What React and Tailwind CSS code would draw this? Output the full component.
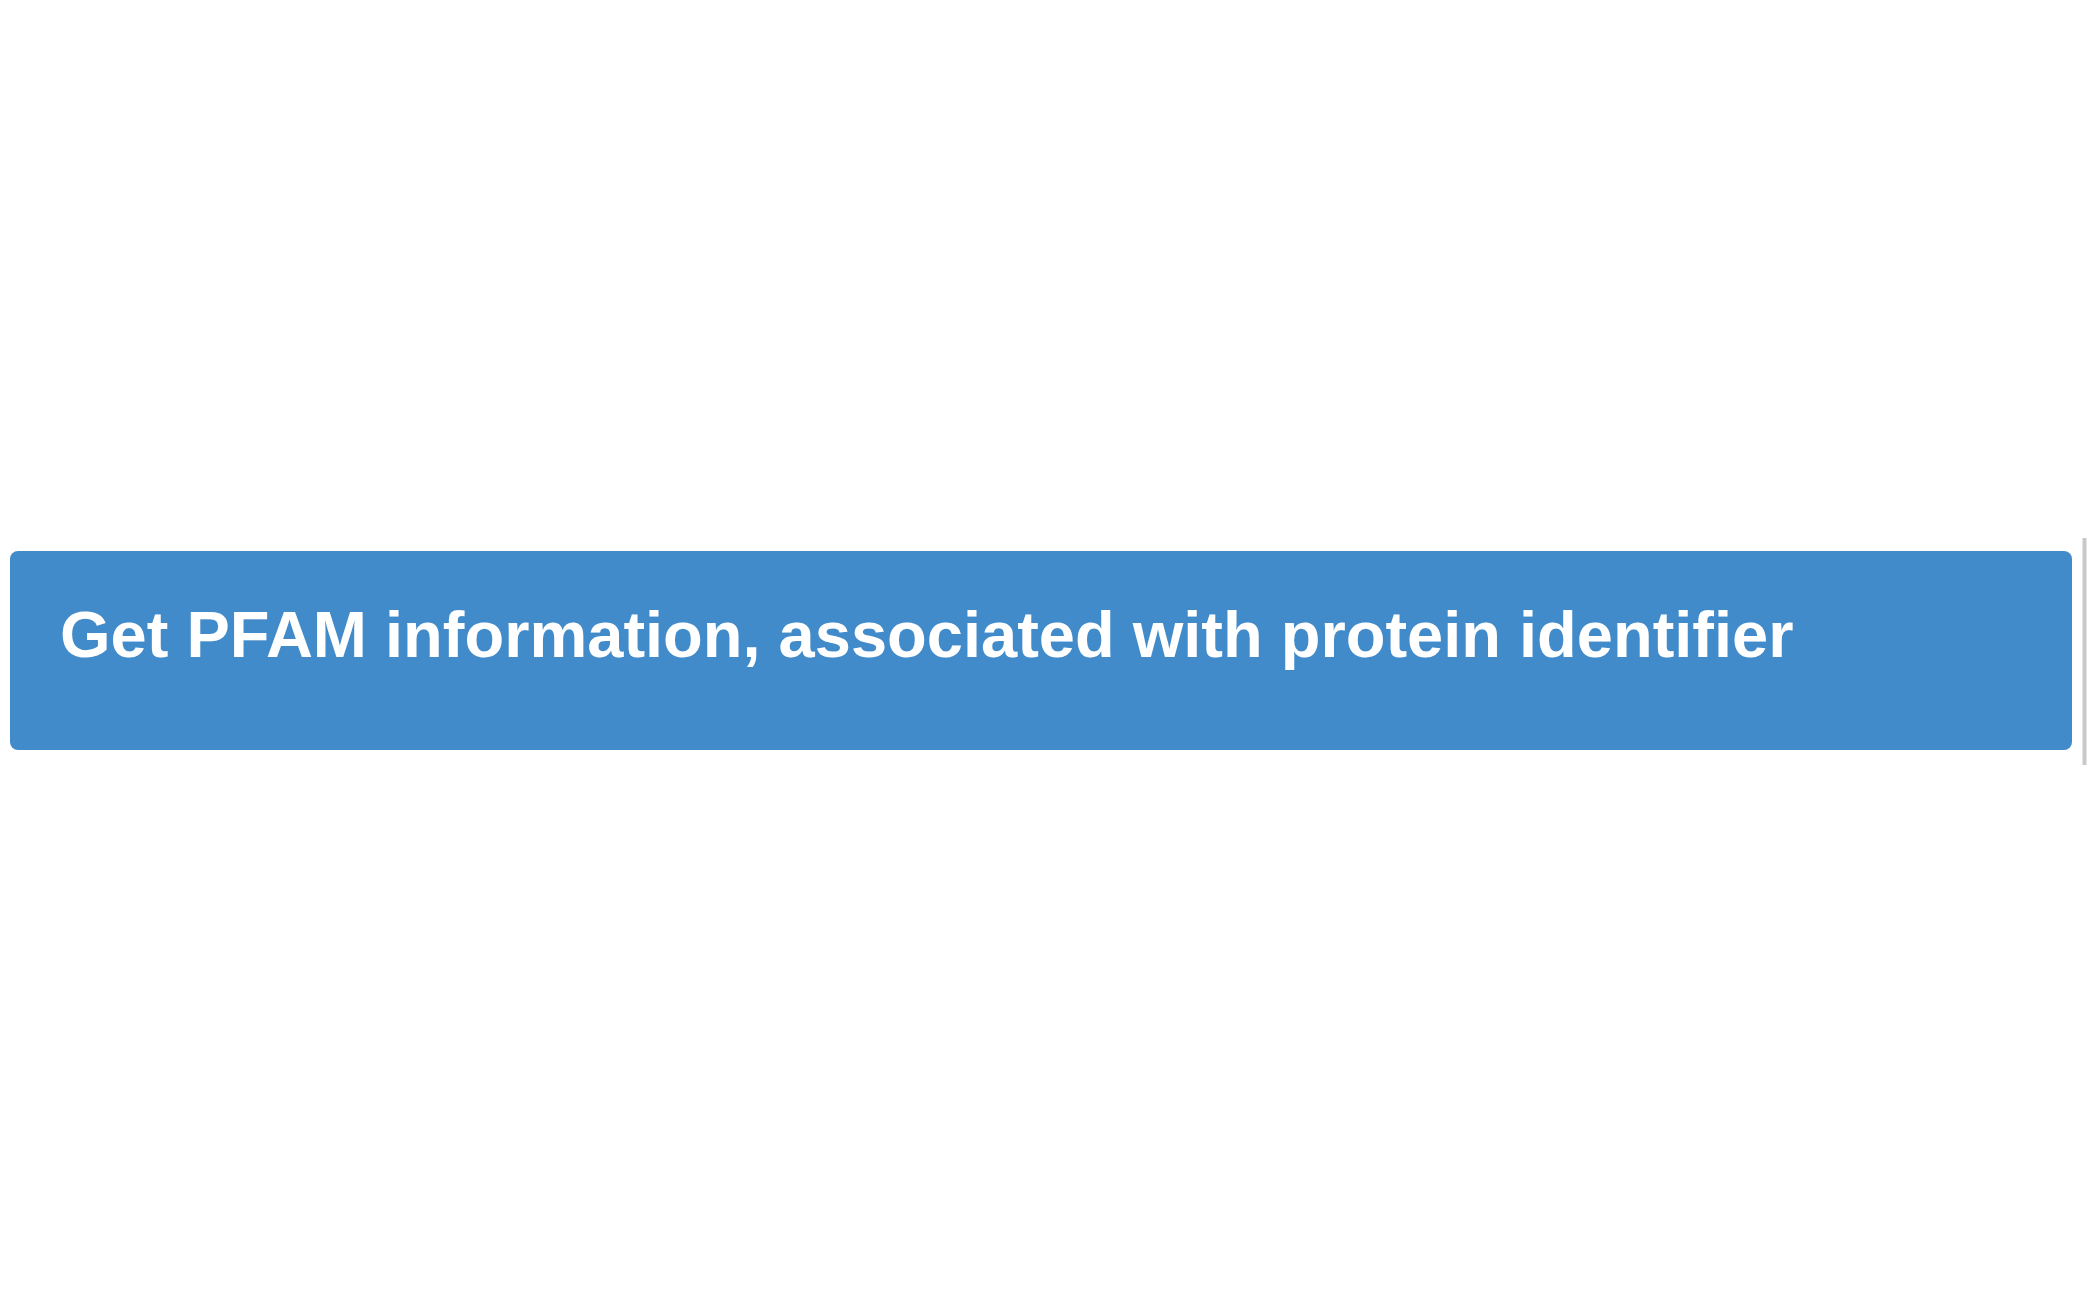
export default function App() {
  return (
    <div className="min-h-screen bg-white pt-[538px]">
      <div className="flex items-start">
        {/* panel heading */}
        <div className="ml-[10px] mt-[13px] h-[199px] w-[2062px] rounded-[8px] bg-[#428bca] pl-[50px] pt-[35px]">
          <h3 className="font-['Liberation_Sans',Arial,sans-serif] text-[65px] font-bold leading-normal text-white">
            Get PFAM information, associated with protein identifier
          </h3>
        </div>
        {/* scrollbar edge */}
        <div className="ml-[10px] h-[227px] w-[5px] border-x border-[#e4e4e4] bg-[#c8c8c8]" />
      </div>
    </div>
  );
}
